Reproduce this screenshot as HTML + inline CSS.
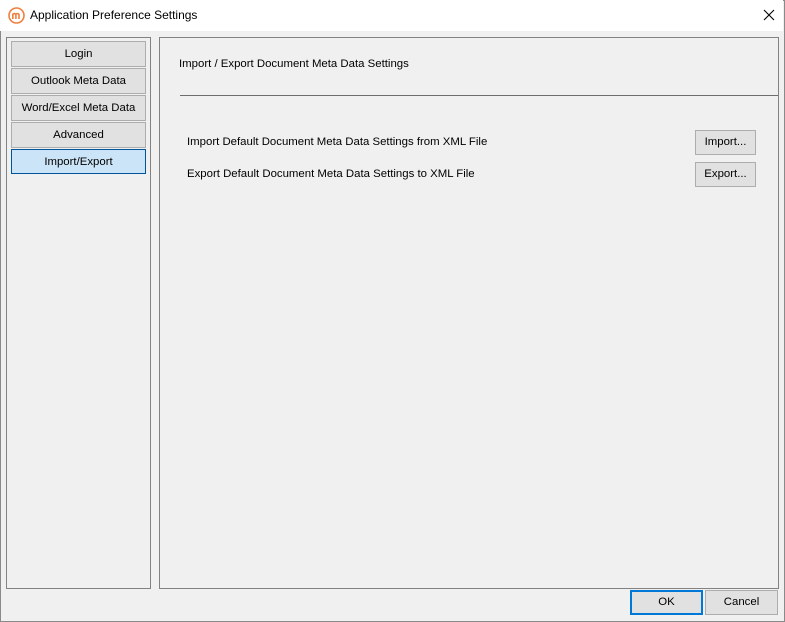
<!DOCTYPE html>
<html><head><style>
*{margin:0;padding:0;box-sizing:border-box}
body{width:785px;height:622px;background:#f0f0f0;font-family:"Liberation Sans",sans-serif;font-size:11.4px;color:#000;position:relative;overflow:hidden}
.win{position:absolute;left:0;top:0;width:785px;height:622px;border:1px solid #8a8a8a}
.title{position:absolute;left:0;top:0;width:783px;height:31px;background:#fff}
.abs{position:absolute}
.nav{position:absolute;left:11px;width:135px;height:26px;background:#e1e1e1;border:1px solid #adadad;text-align:center;line-height:24px;font-size:11.4px}
.btn{position:absolute;background:#e1e1e1;border:1px solid #adadad;text-align:center;font-size:11.4px}
.panel{position:absolute;border:1px solid #828282}
</style></head><body>
<div class="win"></div>
<div class="title"></div>
<svg class="abs" style="left:8px;top:7px" width="17" height="17" viewBox="0 0 17 17"><circle cx="8.5" cy="8.5" r="7.5" fill="#fff" stroke="#f07f3c" stroke-width="1.6"/><path d="M4.8 12V6.5M4.8 7.5q1.6-1.8 3.1 0V12M7.9 7.5q1.6-1.8 3.1 0V12" fill="none" stroke="#f07f3c" stroke-width="1.6"/></svg>
<div class="abs" style="left:30px;top:8px;font-size:12px">Application Preference Settings</div>
<svg class="abs" style="left:763px;top:9px" width="12" height="12"><path d="M1 1L11 11M11 1L1 11" stroke="#000" stroke-width="1.1"/></svg>
<div class="panel" style="left:6px;top:37px;width:145px;height:552px"></div>
<div class="panel" style="left:159px;top:37px;width:620px;height:552px"></div>
<div class="nav" style="top:41px">Login</div>
<div class="nav" style="top:68px">Outlook Meta Data</div>
<div class="nav" style="top:95px">Word/Excel Meta Data</div>
<div class="nav" style="top:122px">Advanced</div>
<div class="nav" style="top:149px;height:25px;background:#cce4f7;border-color:#005499">Import/Export</div>
<div class="abs" style="left:179px;top:58px">Import / Export Document Meta Data Settings</div>
<div class="abs" style="left:180px;top:95px;width:598px;height:1px;background:#6d6d6d"></div>
<div class="abs" style="left:187px;top:136px">Import Default Document Meta Data Settings from XML File</div>
<div class="abs" style="left:187px;top:168px">Export Default Document Meta Data Settings to XML File</div>
<div class="btn" style="left:695px;top:130px;width:61px;height:25px;line-height:23px">Import...</div>
<div class="btn" style="left:695px;top:162px;width:61px;height:25px;line-height:23px">Export...</div>
<div class="btn" style="left:630px;top:590px;width:73px;height:25px;line-height:21px;border:2px solid #0078d7">OK</div>
<div class="btn" style="left:705px;top:590px;width:73px;height:25px;line-height:23px">Cancel</div>
</body></html>
